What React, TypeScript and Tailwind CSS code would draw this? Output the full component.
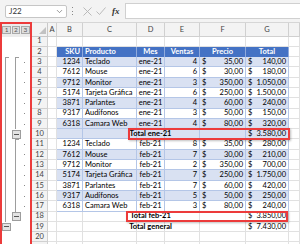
import { ChevronDown } from "lucide-react";

type Kind = "empty" | "head" | "data" | "sub" | "plain";

type SheetRow = {
  n: number;
  kind: Kind;
  band?: boolean;
  sku?: string;
  prod?: string;
  mes?: string;
  ventas?: string;
  precio?: string;
  total?: string;
  boxed?: boolean;
};

const products = [
  ["1234", "Teclado", "35,00"],
  ["7612", "Mouse", "30,00"],
  ["9712", "Monitor", "350,00"],
  ["5174", "Tarjeta Gráfica", "250,00"],
  ["3871", "Parlantes", "60,00"],
  ["9317", "Audífonos", "50,00"],
  ["6318", "Camara Web", "80,00"],
];

const ene = [
  ["4", "140,00"],
  ["6", "180,00"],
  ["3", "1.050,00"],
  ["6", "1.500,00"],
  ["4", "240,00"],
  ["3", "150,00"],
  ["4", "320,00"],
];

const feb = [
  ["8", "280,00"],
  ["7", "210,00"],
  ["2", "700,00"],
  ["7", "1.750,00"],
  ["7", "420,00"],
  ["5", "250,00"],
  ["3", "240,00"],
];

function buildRows(): SheetRow[] {
  const rows: SheetRow[] = [{ n: 1, kind: "empty" }, { n: 2, kind: "head" }];
  products.forEach((p, i) => {
    rows.push({
      n: 3 + i,
      kind: "data",
      band: i % 2 === 0,
      sku: p[0],
      prod: p[1],
      mes: "ene-21",
      ventas: ene[i][0],
      precio: p[2],
      total: ene[i][1],
    });
  });
  rows.push({ n: 10, kind: "sub", band: true, mes: "Total ene-21", total: "3.580,00", boxed: true });
  products.forEach((p, i) => {
    rows.push({
      n: 11 + i,
      kind: "data",
      band: i % 2 === 1,
      sku: p[0],
      prod: p[1],
      mes: "feb-21",
      ventas: feb[i][0],
      precio: p[2],
      total: feb[i][1],
    });
  });
  rows.push({ n: 18, kind: "plain", mes: "Total feb-21", total: "3.850,00", boxed: true });
  rows.push({ n: 19, kind: "plain", mes: "Total general", total: "7.430,00" });
  rows.push({ n: 20, kind: "empty" });
  rows.push({ n: 21, kind: "empty" });
  return rows;
}

const rows = buildRows();

const gridCols = "grid grid-cols-[16px_9px_26px_54px_28px_35px_46px_43px_1fr]";

function Money({ value }: { value?: string }) {
  if (!value) return null;
  return (
    <div className="flex w-full justify-between px-[2px]">
      <span>$</span>
      <span>{value}</span>
    </div>
  );
}

function OutlineLine({ tick }: { tick?: boolean }) {
  return (
    <div
      className={
        tick
          ? "h-full w-[4px] border-l border-t border-[#9d9d9d]"
          : "h-full w-[4px] border-l border-[#9d9d9d]"
      }
    />
  );
}

function MinusBtn() {
  return (
    <div className="flex h-[8.5px] w-[9px] items-center justify-center border border-[#9d9d9d] bg-[#e3e3e3]">
      <div className="h-px w-[5px] bg-[#555]" />
    </div>
  );
}

function OutlinePanel() {
  return (
    <div className="flex h-[240px] w-[32px] shrink-0 flex-col border-2 border-[#ec3b3b] bg-white">
      <div className="flex h-[12.5px] items-center bg-[#ececec]">
        {["1", "2", "3"].map((l) => (
          <div key={l} className="flex w-[9.33px] justify-center">
            <div className="flex h-[8px] w-[8.5px] items-center justify-center border border-[#a9a9a9] bg-[#dedede] text-[6.5px] leading-none text-[#555]">
              {l}
            </div>
          </div>
        ))}
      </div>
      {rows.map((r) => {
        const n = r.n;
        const inA = n >= 3 && n <= 9;
        const inB = n >= 11 && n <= 17;
        return (
          <div key={n} className="flex h-[10.3px]">
            <div className="flex w-[9.5px] items-center">
              {n >= 3 && n <= 18 && (
                <div className="ml-[2.5px] h-full">
                  <OutlineLine tick={n === 3} />
                </div>
              )}
              {n === 19 && <MinusBtn />}
            </div>
            <div className="flex w-[9.5px] items-center">
              {(inA || inB) && (
                <div className="ml-[3px] h-full">
                  <OutlineLine tick={n === 3 || n === 11} />
                </div>
              )}
              {(n === 10 || n === 18) && <MinusBtn />}
            </div>
            <div className="flex w-[9px] items-center">
              {(inA || inB) && <div className="ml-[3px] h-px w-px bg-[#8a8a8a]" />}
            </div>
          </div>
        );
      })}
    </div>
  );
}

function RowCells({ r }: { r: SheetRow }) {
  const grid = "border-r border-b border-[#e1e1e1]";
  if (r.kind === "empty") {
    return (
      <>
        {Array.from({ length: 8 }).map((_, i) => (
          <div key={i} className={grid} />
        ))}
      </>
    );
  }
  if (r.kind === "head") {
    const h = "flex items-center bg-[#4472c4] border-r border-[#8faadc] font-bold text-white px-[2px]";
    return (
      <>
        <div className={grid} />
        <div className={`${h} justify-end`}>SKU</div>
        <div className={h}>Producto</div>
        <div className={`${h} justify-center`}>Mes</div>
        <div className={`${h} justify-center`}>Ventas</div>
        <div className={`${h} justify-center`}>Precio</div>
        <div className={`${h} justify-center`}>Total</div>
        <div className={grid} />
      </>
    );
  }
  if (r.kind === "plain") {
    return (
      <>
        <div className={grid} />
        <div className={grid} />
        <div className={grid} />
        <div className={`${grid} flex items-center justify-center overflow-visible`}>
          <span className="relative z-10 whitespace-nowrap font-bold">{r.mes}</span>
        </div>
        <div className={grid} />
        <div className={grid} />
        <div className={`${grid} flex items-center`}>
          <Money value={r.total} />
        </div>
        <div className={grid} />
      </>
    );
  }
  const bg = r.band ? "bg-[#d9e1f2]" : "bg-white";
  const t = `${bg} flex items-center border-r border-b border-[#b4c6e7] whitespace-nowrap`;
  if (r.kind === "sub") {
    return (
      <>
        <div className={grid} />
        <div className={t} />
        <div className={t} />
        <div className={`${t} justify-center overflow-visible`}>
          <span className="relative z-10 font-bold">{r.mes}</span>
        </div>
        <div className={t} />
        <div className={t} />
        <div className={t}>
          <Money value={r.total} />
        </div>
        <div className={grid} />
      </>
    );
  }
  return (
    <>
      <div className={grid} />
      <div className={`${t} justify-end px-[2px]`}>{r.sku}</div>
      <div className={`${t} px-[2px]`}>{r.prod}</div>
      <div className={`${t} justify-center`}>{r.mes}</div>
      <div className={`${t} justify-end px-[2px]`}>{r.ventas}</div>
      <div className={t}>
        <Money value={r.precio} />
      </div>
      <div className={t}>
        <Money value={r.total} />
      </div>
      <div className={grid} />
    </>
  );
}

function Sheet() {
  const letters = ["A", "B", "C", "D", "E", "F", "G", ""];
  return (
    <div className="relative min-w-0 flex-1 bg-white">
      <div className={`${gridCols} h-[14.5px] border-t border-[#d6d6d6] bg-[#f3f3f3]`}>
        <div className="relative border-r border-b border-[#c8c8c8]">
          <div className="absolute bottom-[1.5px] right-[1.5px] h-0 w-0 border-b-[7px] border-l-[7px] border-b-[#c2c2c2] border-l-transparent" />
        </div>
        {letters.map((l, i) => (
          <div
            key={i}
            className="flex items-center justify-center border-r border-b border-[#d0d0d0] text-[7.5px] text-[#444]"
          >
            {l}
          </div>
        ))}
      </div>
      {rows.map((r) => (
        <div key={r.n} className={`${gridCols} relative h-[10.3px] text-[7.5px] leading-none text-black`}>
          <div className="flex items-center justify-center border-r border-b border-[#d0d0d0] bg-[#f3f3f3] text-[#444]">
            {r.n < 21 ? r.n : ""}
          </div>
          <RowCells r={r} />
          {r.boxed && (
            <div
              className={
                r.n === 10
                  ? "pointer-events-none absolute left-[96px] top-[-1.5px] z-20 h-[12.5px] w-[162px] border-2 border-[#ec3b3b] shadow-[1px_1px_2px_rgba(0,0,0,0.25)]"
                  : "pointer-events-none absolute left-[94px] top-[-1px] z-20 h-[11px] w-[162px] border-2 border-[#ec3b3b] shadow-[1px_1px_2px_rgba(0,0,0,0.25)]"
              }
            />
          )}
        </div>
      ))}
    </div>
  );
}

function FormulaBar() {
  return (
    <div className="flex h-[22px] items-center bg-[#f3f3f3] text-[#333]">
      <div className="ml-[5px] flex h-[13px] w-[62px] items-center justify-between rounded-[2px] border border-[#c6c6c6] bg-white pl-[3px] pr-[2px]">
        <span className="text-[8px] leading-none">J22</span>
        <ChevronDown size={9} strokeWidth={1.6} className="text-[#555]" />
      </div>
      <div className="ml-[5px] flex h-[8px] flex-col justify-between">
        <div className="h-px w-px bg-[#888]" />
        <div className="h-px w-px bg-[#888]" />
        <div className="h-px w-px bg-[#888]" />
      </div>
      <svg className="ml-[10px]" width="9" height="9" viewBox="0 0 9 9" fill="none" stroke="#b3b3b3" strokeWidth="0.9">
        <path d="M0.5 0.5 L8.5 8.5 M8.5 0.5 L0.5 8.5" />
      </svg>
      <svg className="ml-[4px]" width="10" height="8" viewBox="0 0 10 8" fill="none" stroke="#b3b3b3" strokeWidth="0.9">
        <path d="M0.5 4.5 L3.5 7.5 L9.5 0.5" />
      </svg>
      <span className="ml-[6px] font-['Liberation_Serif',serif] text-[9px] font-bold italic leading-none text-[#333]">
        fx
      </span>
      <div className="ml-[5px] h-[16px] flex-1 border-y border-l border-[#d0d0d0] bg-white" />
    </div>
  );
}

export default function App() {
  return (
    <div className="h-[244px] w-[300px] overflow-hidden bg-white font-['Lato','Liberation_Sans',sans-serif]">
      <FormulaBar />
      <div className="flex">
        <OutlinePanel />
        <Sheet />
      </div>
    </div>
  );
}
